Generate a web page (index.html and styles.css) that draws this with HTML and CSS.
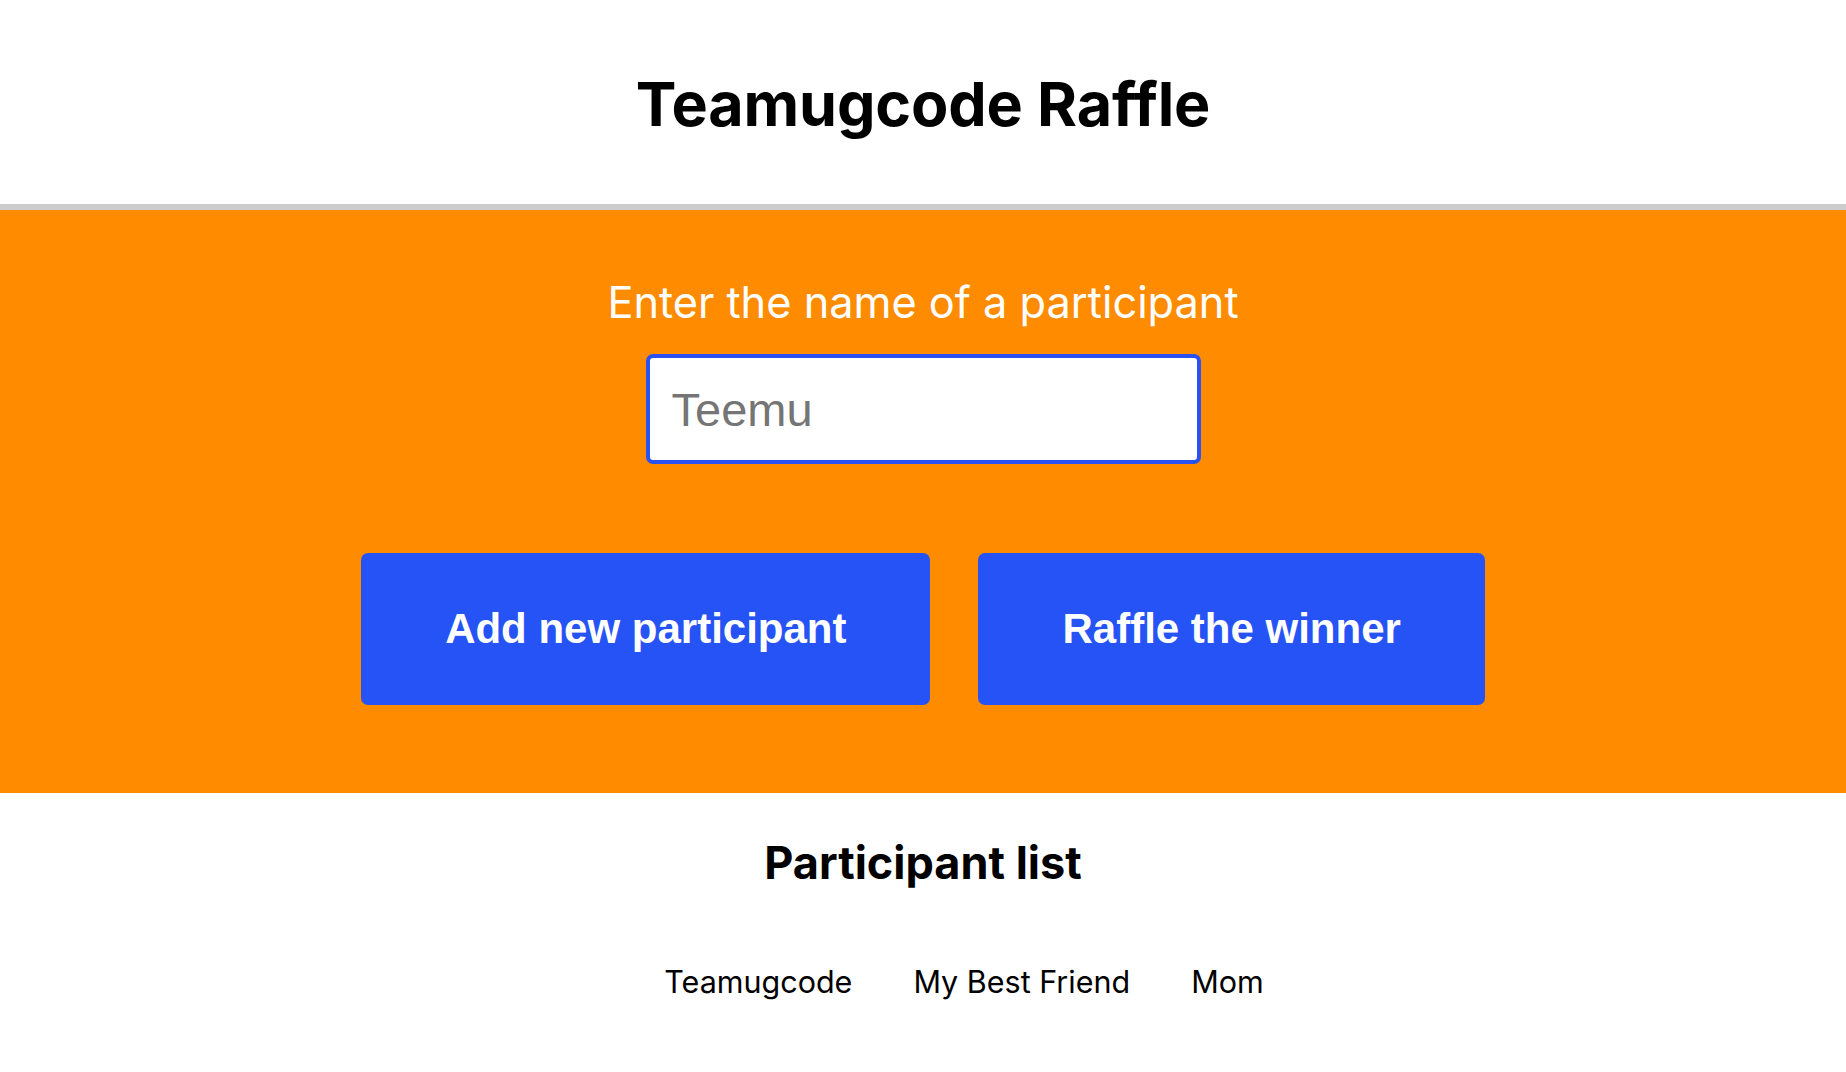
FILE: index.html
```html
<!DOCTYPE html>
<html lang="en">
<head>
<meta charset="utf-8">
<title>Teamugcode Raffle</title>
<link rel="stylesheet" href="styles.css">
</head>
<body>
<header class="header">
  <h1 class="title">Teamugcode Raffle</h1>
</header>
<section class="entry">
  <label class="entry-label" for="name">Enter the name of a participant</label>
  <input class="entry-input" id="name" type="text" placeholder="Teemu">
  <div class="actions">
    <button class="btn" type="button">Add new participant</button>
    <button class="btn" type="button">Raffle the winner</button>
  </div>
</section>
<section class="list">
  <h2 class="list-title">Participant list</h2>
  <ul class="names">
    <li class="name">Teamugcode</li>
    <li class="name">My Best Friend</li>
    <li class="name">Mom</li>
  </ul>
</section>
</body>
</html>
```
FILE: styles.css
```css
* { box-sizing: border-box; }
html, body { margin: 0; padding: 0; }
body {
  font-family: Inter, "Noto Sans", sans-serif;
  background: #fff;
  color: #000;
  height: 1072px;
  overflow: hidden;
}
.header {
  height: 210px;
  padding-top: 67px;
  border-bottom: 6px solid #d4d4d4;
  border-image: linear-gradient(#e6e6e6, #cccccc) 1;
  text-align: center;
}
.title {
  margin: 0;
  font-size: 61px;
  font-weight: 700;
  line-height: 74px;
  letter-spacing: -0.15px;
}
.entry {
  background: #ff8c00;
  height: 583px;
  padding-top: 66px;
  display: flex;
  flex-direction: column;
  align-items: center;
}
.entry-label {
  color: #fff;
  font-size: 43.3px;
  font-weight: 400;
  line-height: 53px;
}
.entry-input {
  margin-top: 25px;
  width: 555px;
  height: 110px;
  border: 4px solid #2a52f2;
  border-radius: 7px;
  padding: 0 22px;
  font-family: "Liberation Sans", Arial, sans-serif;
  font-size: 47px;
  color: #333;
  background: #fff;
  outline: none;
}
.entry-input::placeholder { color: #757575; }
.actions {
  margin-top: 89px;
  display: flex;
  gap: 48px;
}
.btn {
  height: 152px;
  padding: 0 84px;
  border: none;
  border-radius: 7px;
  background: #2553f5;
  color: #fff;
  font-family: "Liberation Sans", Arial, sans-serif;
  font-weight: 700;
  font-size: 42px;
  cursor: pointer;
}
.list {
  text-align: center;
  padding-top: 43px;
}
.list-title {
  margin: 0;
  font-size: 45px;
  font-weight: 700;
  line-height: 54px;
}
.names {
  list-style: none;
  margin: 74px 0 0;
  padding: 0 0 0 82px;
  display: flex;
  justify-content: center;
  gap: 61px;
}
.name {
  font-size: 30.5px;
  line-height: 36px;
}
```
